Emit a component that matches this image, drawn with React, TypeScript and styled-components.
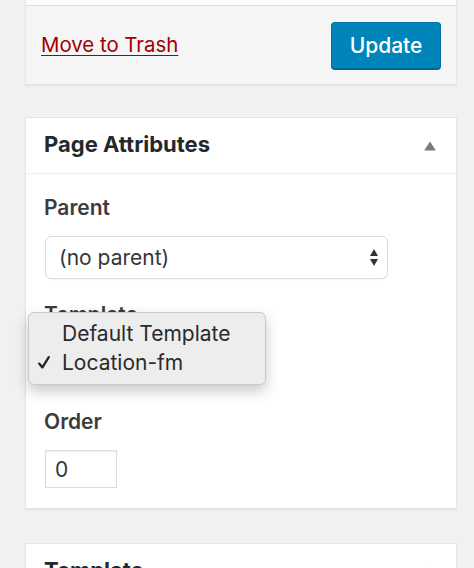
import React from "react";
import styled, { createGlobalStyle } from "styled-components";

const GlobalStyle = createGlobalStyle`
  html, body { margin: 0; padding: 0; background: #ffffff; }
  body { font-family: Inter, "Noto Sans", "Liberation Sans", sans-serif; }
  * { box-sizing: border-box; }
`;

const Page = styled.div`
  height: 568px;
  overflow: hidden;
  background: #f1f1f1;
  padding: 0 17px 0 25px;
  display: flex;
  flex-direction: column;
`;

const Postbox = styled.div<{ $top?: boolean }>`
  width: 432px;
  flex-shrink: 0;
  background: #ffffff;
  border: 1px solid #e5e5e5;
  border-top: ${(p) => (p.$top ? "none" : "1px solid #e5e5e5")};
  box-shadow: 0 1px 1px rgba(0, 0, 0, 0.05);
`;

const Spacer = styled.div<{ $h: number }>`
  height: ${(p) => p.$h}px;
  flex-shrink: 0;
`;

const PublishTop = styled.div`
  height: 5px;
  background: #ffffff;
`;

const ActionBar = styled.div`
  height: 79px;
  background: #f5f5f5;
  border-top: 1px solid #dddddd;
  display: flex;
  align-items: center;
  justify-content: space-between;
  padding: 0 15px 0 15px;
`;

const TrashLink = styled.a`
  color: #a00000;
  font-size: 20.4px;
  line-height: 26px;
  text-decoration: underline;
  text-decoration-thickness: 1px;
  text-underline-offset: 3px;
  cursor: pointer;
`;

const PrimaryButton = styled.button`
  height: 47px;
  width: 110px;
  border-radius: 4px;
  background: #0085ba;
  border: 1px solid #0073aa;
  border-bottom-color: #006799;
  box-shadow: 0 1px 0 #006799;
  color: #ffffff;
  font-family: inherit;
  font-size: 21px;
  font-weight: 500;
  padding: 0;
  cursor: pointer;
`;

const BoxHeader = styled.div`
  height: 56px;
  border-bottom: 1px solid #eeeeee;
  display: flex;
  align-items: center;
  justify-content: space-between;
  padding: 0 20px 0 18px;
`;

const BoxTitle = styled.h2`
  margin: 0;
  font-size: 22px;
  font-weight: 700;
  color: #23282d;
  line-height: 55px;
  margin-top: -2px;
`;

const Toggle = styled.svg`
  width: 12px;
  height: 10px;
`;

const BoxBody = styled.div`
  padding: 21px 18px 20px 18px;
  display: flex;
  flex-direction: column;
`;

const Field = styled.div<{ $gap?: number }>`
  position: relative;
  display: flex;
  flex-direction: column;
  align-items: flex-start;
  margin-top: ${(p) => p.$gap ?? 0}px;
`;

const Label = styled.label`
  font-size: 21px;
  line-height: 26px;
  font-weight: 600;
  color: #3c3c3c;
  margin-bottom: 15px;
`;

const SelectBox = styled.div<{ $w: number; $h: number }>`
  width: ${(p) => p.$w}px;
  height: ${(p) => p.$h}px;
  margin-left: 1px;
  border: 1px solid #dcdcdc;
  border-radius: 6px;
  background: #ffffff;
  box-shadow: 0 1px 1px rgba(0, 0, 0, 0.04);
  display: flex;
  align-items: center;
  justify-content: space-between;
  padding: 0 8px 0 13px;
  font-size: 21px;
  color: #32373c;
`;

const Arrows = styled.svg`
  width: 10px;
  height: 20px;
`;

const Popup = styled.div`
  position: absolute;
  left: -16px;
  top: 10px;
  width: 238px;
  height: 73px;
  background: #ededed;
  border: 1px solid #c9c9c9;
  border-radius: 6px;
  box-shadow: 0 6px 14px rgba(0, 0, 0, 0.22);
  padding: 6px 0;
  z-index: 2;
`;

const PopupItem = styled.div`
  position: relative;
  height: 29px;
  line-height: 29px;
  padding-left: 33px;
  font-size: 21px;
  color: #2a2a2a;
  white-space: nowrap;
`;

const Check = styled.svg`
  position: absolute;
  left: 9px;
  top: 8px;
  width: 12px;
  height: 13px;
`;

const NumberInput = styled.div`
  margin-left: 1px;
  width: 72px;
  height: 38px;
  border: 1px solid #dddddd;
  box-shadow: inset 0 1px 2px rgba(0, 0, 0, 0.07);
  background: #ffffff;
  display: flex;
  align-items: center;
  padding-left: 9px;
  font-size: 21px;
  color: #32373c;
`;

export default function App() {
  return (
    <>
      <GlobalStyle />
      <Page>
        <Postbox $top>
          <PublishTop />
          <ActionBar>
            <TrashLink>Move to Trash</TrashLink>
            <PrimaryButton>Update</PrimaryButton>
          </ActionBar>
        </Postbox>
        <Spacer $h={32} />
        <Postbox>
          <BoxHeader>
            <BoxTitle>Page Attributes</BoxTitle>
            <Toggle viewBox="0 0 12 10">
              <path d="M6 0.5 L11.8 9.5 L0.2 9.5 Z" fill="#7a7a7a" />
            </Toggle>
          </BoxHeader>
          <BoxBody>
            <Field>
              <Label>Parent</Label>
              <SelectBox $w={343} $h={43}>
                <span>(no parent)</span>
                <Arrows viewBox="0 0 10 20">
                  <path d="M5 1 L9 8 L1 8 Z" fill="#333" />
                  <path d="M1 11 L9 11 L5 18 Z" fill="#333" />
                </Arrows>
              </SelectBox>
            </Field>
            <Field $gap={23}>
              <Label>Template</Label>
              <SelectBox $w={220} $h={40} />
              <Popup>
                <PopupItem>Default Template</PopupItem>
                <PopupItem>
                  <Check viewBox="0 0 12 13">
                    <path
                      d="M1.2 7.6 L4.4 11.4 L10.8 1.2"
                      fill="none"
                      stroke="#222"
                      strokeWidth="2.3"
                      strokeLinecap="round"
                      strokeLinejoin="round"
                    />
                  </Check>
                  Location-fm
                </PopupItem>
              </Popup>
            </Field>
            <Field $gap={26}>
              <Label>Order</Label>
              <NumberInput>0</NumberInput>
            </Field>
          </BoxBody>
        </Postbox>
        <Spacer $h={34} />
        <Postbox>
          <BoxHeader>
            <BoxTitle>Template</BoxTitle>
            <Toggle viewBox="0 0 12 10">
              <path d="M6 0.5 L11.8 9.5 L0.2 9.5 Z" fill="#7a7a7a" />
            </Toggle>
          </BoxHeader>
        </Postbox>
      </Page>
    </>
  );
}
